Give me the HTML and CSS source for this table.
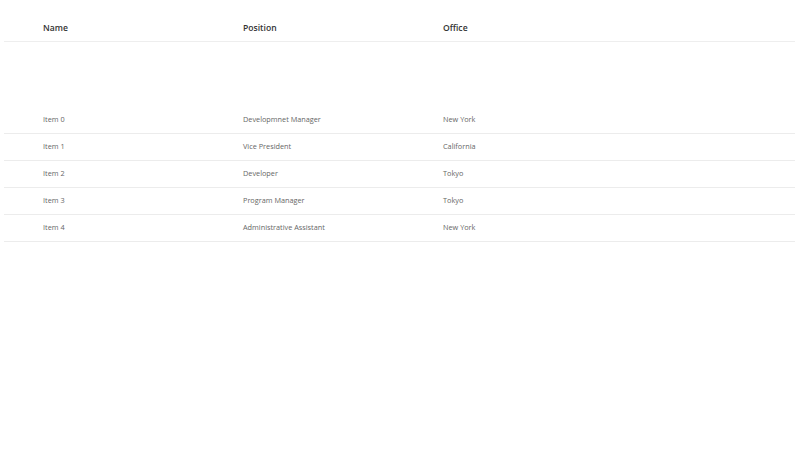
FILE: index.html
```html
<!DOCTYPE html>
<html>
<head>
<meta charset="utf-8">
<link rel="stylesheet" href="styles.css">
</head>
<body>
<div class="table">
  <div class="row head">
    <div class="cell">Name</div>
    <div class="cell">Position</div>
    <div class="cell">Office</div>
  </div>
  <div class="spacer"></div>
  <div class="row"><div class="cell">Item 0</div><div class="cell">Developmnet Manager</div><div class="cell">New York</div></div>
  <div class="row"><div class="cell">Item 1</div><div class="cell">Vice President</div><div class="cell">California</div></div>
  <div class="row"><div class="cell">Item 2</div><div class="cell">Developer</div><div class="cell">Tokyo</div></div>
  <div class="row"><div class="cell">Item 3</div><div class="cell">Program Manager</div><div class="cell">Tokyo</div></div>
  <div class="row"><div class="cell">Item 4</div><div class="cell">Administrative Assistant</div><div class="cell">New York</div></div>
</div>
</body>
</html>
```
FILE: styles.css
```css
html, body { margin: 0; padding: 0; background: #fff; }
body { font-family: "Open Sans", "Noto Sans", sans-serif; }
.table { margin: 0 4px 0 4px; width: 791px; }
.row {
  display: grid;
  grid-template-columns: 200px 200px 1fr;
  padding-left: 39px;
  padding-bottom: 2px;
  height: 27px;
  box-sizing: border-box;
  align-items: center;
  border-bottom: 1px solid #ececec;
  font-size: 7.3px;
  color: #666;
}
.head {
  height: 42px;
  font-size: 8.6px;
  font-weight: 600;
  color: #333;
  border-bottom: 1px solid #eeeeee;
  align-items: end;
  padding-bottom: 7px;
}
.spacer { height: 65px; }
```
